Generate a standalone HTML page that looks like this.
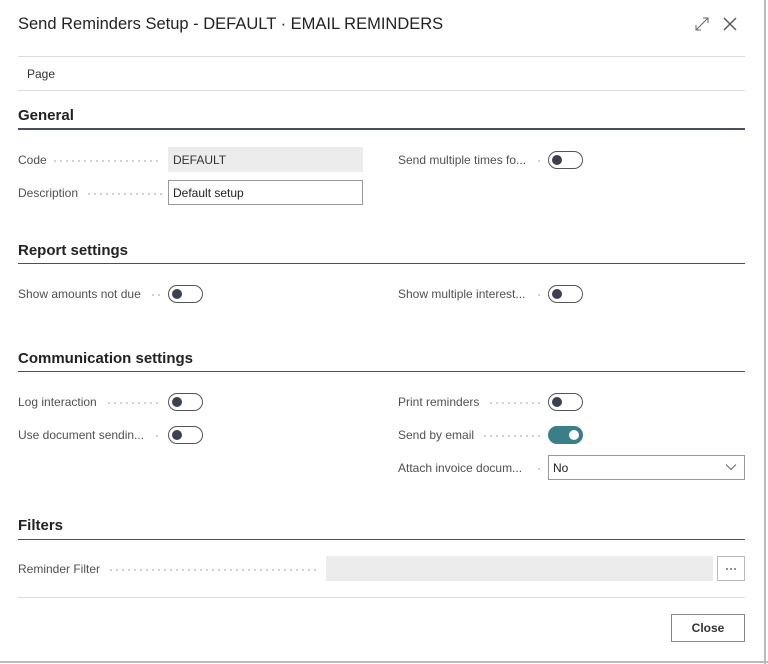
<!DOCTYPE html>
<html><head><style>
body{margin:0;width:768px;height:664px;background:#fff;font-family:"Liberation Sans",sans-serif;position:relative;overflow:hidden;color:#333}
.a{position:absolute}
.t{font-size:12px;color:#505050;white-space:nowrap}
.d{position:absolute;height:2px;background-image:radial-gradient(circle,#aaa 0.7px,transparent 0.9px);background-size:6px 2px}
.h{font-size:15px;font-weight:bold;color:#222}
.tg{position:absolute;border:1px solid #555;border-radius:9px;box-sizing:border-box;width:35px;height:18px}
.tg::after{content:"";position:absolute;left:3px;top:3px;width:10px;height:10px;border-radius:50%;background:#3c4050}
.on{background:#3a7f87;border-color:#3a7f87}
.on::after{left:auto;right:3px;background:#fff}
</style></head><body>
<div class="a" style="left:764px;top:0;width:2px;height:664px;background:#bbb"></div>
<div class="a" style="left:0;top:661px;width:768px;height:2px;background:#bbb"></div>
<div class="a" style="left:18px;top:15px;font-size:16.5px;color:#222">Send Reminders Setup - DEFAULT · EMAIL REMINDERS</div>
<svg class="a" style="left:694px;top:16px" width="16" height="16" viewBox="0 0 16 16" fill="none" stroke="#666" stroke-width="1"><path d="M2 14L14 2M9 2h5v5M2 9v5h5"/></svg>
<svg class="a" style="left:722px;top:16px" width="16" height="16" viewBox="0 0 16 16" fill="none" stroke="#555" stroke-width="1.4"><path d="M2 2L14 14M14 2L2 14"/></svg>
<div class="a" style="left:18px;top:56px;width:727px;height:1px;background:#ddd"></div>
<div class="a t" style="left:27px;top:67px;color:#333">Page</div>
<div class="a" style="left:18px;top:90px;width:727px;height:1px;background:#ddd"></div>

<div class="a h" style="left:18px;top:107px">General</div>
<div class="a" style="left:18px;top:128px;width:727px;height:2px;background:#4a5060"></div>
<div class="a t" style="left:18px;top:153px">Code</div><div class="d" style="left:52px;top:160px;width:110px"></div>
<div class="a" style="left:168px;top:147px;width:195px;height:25px;background:#ececec"></div>
<div class="a t" style="left:173px;top:153px;color:#333">DEFAULT</div>
<div class="a t" style="left:18px;top:186px">Description</div><div class="d" style="left:86px;top:193px;width:76px"></div>
<div class="a" style="left:168px;top:180px;width:195px;height:25px;border:1px solid #999;box-sizing:border-box"></div>
<div class="a t" style="left:173px;top:186px;color:#222">Default setup</div>
<div class="a t" style="left:398px;top:153px">Send multiple times fo...</div><div class="d" style="left:536px;top:160px;width:6px"></div>
<div class="tg" style="left:548px;top:151px"></div>

<div class="a h" style="left:18px;top:242px">Report settings</div>
<div class="a" style="left:18px;top:263px;width:727px;height:1px;background:#4a5060"></div>
<div class="a t" style="left:18px;top:287px">Show amounts not due</div><div class="d" style="left:150px;top:294px;width:12px"></div>
<div class="tg" style="left:168px;top:285px"></div>
<div class="a t" style="left:398px;top:287px">Show multiple interest...</div><div class="d" style="left:536px;top:294px;width:6px"></div>
<div class="tg" style="left:548px;top:285px"></div>

<div class="a h" style="left:18px;top:350px">Communication settings</div>
<div class="a" style="left:18px;top:371px;width:727px;height:1px;background:#4a5060"></div>
<div class="a t" style="left:18px;top:395px">Log interaction</div><div class="d" style="left:106px;top:402px;width:56px"></div>
<div class="tg" style="left:168px;top:393px"></div>
<div class="a t" style="left:18px;top:428px">Use document sendin...</div><div class="d" style="left:154px;top:435px;width:8px"></div>
<div class="tg" style="left:168px;top:426px"></div>
<div class="a t" style="left:398px;top:395px">Print reminders</div><div class="d" style="left:488px;top:402px;width:54px"></div>
<div class="tg" style="left:548px;top:393px"></div>
<div class="a t" style="left:398px;top:428px">Send by email</div><div class="d" style="left:482px;top:435px;width:60px"></div>
<div class="tg on" style="left:548px;top:426px"></div>
<div class="a t" style="left:398px;top:461px">Attach invoice docum...</div><div class="d" style="left:536px;top:468px;width:6px"></div>
<div class="a" style="left:548px;top:455px;width:197px;height:25px;border:1px solid #999;box-sizing:border-box"></div>
<div class="a t" style="left:553px;top:461px;color:#222">No</div>
<svg class="a" style="left:725px;top:463px" width="12" height="8" viewBox="0 0 12 8" fill="none" stroke="#666"><path d="M1 1.5L6 6.5L11 1.5"/></svg>

<div class="a h" style="left:18px;top:517px">Filters</div>
<div class="a" style="left:18px;top:539px;width:727px;height:1px;background:#4a5060"></div>
<div class="a t" style="left:18px;top:562px">Reminder Filter</div><div class="d" style="left:108px;top:569px;width:212px"></div>
<div class="a" style="left:326px;top:556px;width:387px;height:25px;background:#ececec"></div>
<div class="a" style="left:717px;top:556px;width:28px;height:25px;border:1px solid #bbb;box-sizing:border-box"></div>
<svg class="a" style="left:717px;top:556px" width="28" height="25"><circle cx="10" cy="13" r="0.9" fill="#444"/><circle cx="14" cy="13" r="0.9" fill="#444"/><circle cx="18" cy="13" r="0.9" fill="#444"/></svg>
<div class="a" style="left:18px;top:597px;width:727px;height:1px;background:#ddd"></div>
<div class="a" style="left:671px;top:614px;width:74px;height:28px;border:1px solid #888;box-sizing:border-box;text-align:center;font-size:12px;font-weight:bold;line-height:26px;color:#333">Close</div>
</body></html>
